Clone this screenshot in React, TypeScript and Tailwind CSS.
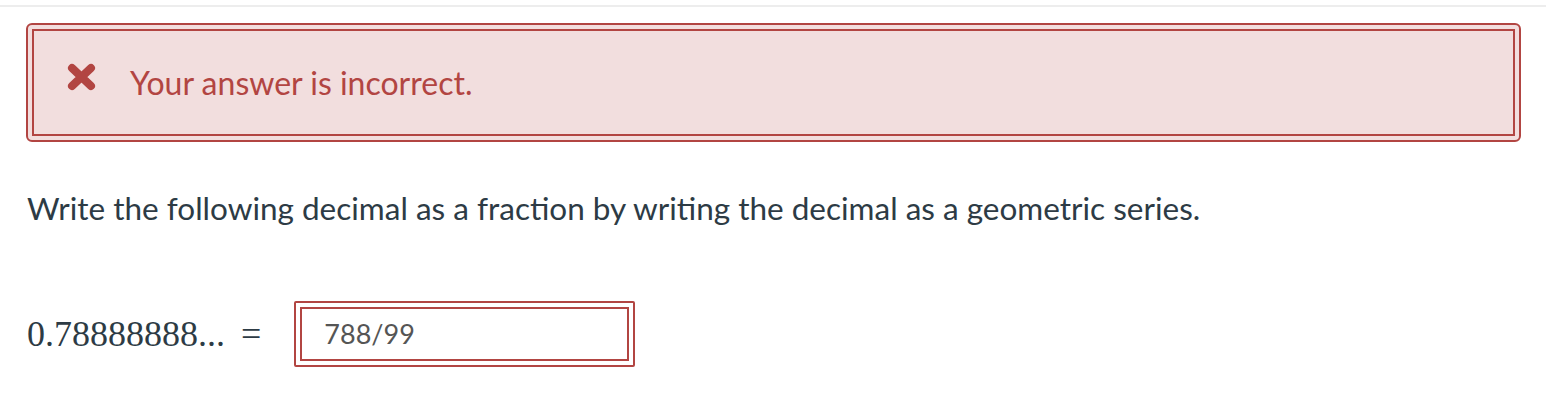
export default function App() {
  return (
    <div className="w-[1546px] h-[402px] overflow-hidden bg-white">
      <div className="pt-[5px]">
        <div className="border-t-2 border-[#ededed]" />
      </div>

      <div className="px-[26px] pt-[16px] pr-[25px]">
        {/* Feedback alert */}
        <div className="rounded-[6px] border-2 border-[#b24542] bg-[#f2dede] p-[4px]">
          <div className="flex h-[107px] items-center border-2 border-[#b24542] pl-[33px]">
            <svg width="29" height="28" viewBox="0 0 29 28" className="shrink-0 -mt-[12px]">
              <path
                d="M5 5 L24 23 M24 5 L5 23"
                stroke="#b24542"
                strokeWidth="8"
                strokeLinecap="round"
              />
            </svg>
            <span
              className="ml-[34px] text-[32px] text-[#b24542]"
              style={{ fontFamily: 'Lato, "Open Sans", sans-serif' }}
            >
              Your answer is incorrect.
            </span>
          </div>
        </div>

        <p
          className="mt-[46px] pl-[1px] text-[31.5px] leading-[40px] text-[#2d3b45]"
          style={{ fontFamily: 'Lato, "Open Sans", sans-serif' }}
        >
          Write the following decimal as a fraction by writing the decimal as a geometric series.
        </p>

        <div className="mt-[73px] flex items-center">
          <span
            className="pl-[1px] text-[36px] text-[#2d3b45]"
            style={{ fontFamily: '"Liberation Serif", "Times New Roman", serif' }}
          >
            0.78888888...<span className="ml-[16px]">=</span>
          </span>
          <div className="ml-[33px] rounded-[2px] border-2 border-[#b24542] p-[4px]">
            <div className="flex h-[54px] w-[329px] items-center border-2 border-[#b24542] pl-[22px]">
              <span
                className="text-[27px] text-[#555555]"
                style={{ fontFamily: 'Lato, "Open Sans", sans-serif' }}
              >
                788/99
              </span>
            </div>
          </div>
        </div>
      </div>
    </div>
  )
}
